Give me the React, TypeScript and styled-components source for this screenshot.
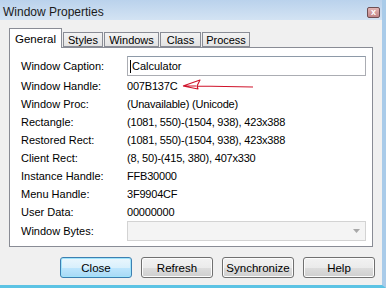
import React from "react";
import styled, { createGlobalStyle } from "styled-components";

const GlobalStyle = createGlobalStyle`
  html, body {
    margin: 0;
    padding: 0;
    overflow: hidden;
    background: #f0f0f0;
  }
`;

const Window = styled.div`
  width: 386px;
  height: 288px;
  box-sizing: border-box;
  display: flex;
  flex-direction: column;
  border-right: 4px solid #a9cbe9;
  border-bottom: 3px solid #5cc3e4;
  font-family: "Liberation Sans", Arial, sans-serif;
  font-size: 11px;
  color: #000;
`;

const TitleBar = styled.div`
  height: 20px;
  flex: none;
  display: flex;
  align-items: center;
  justify-content: space-between;
  padding: 0 2px 0 3px;
  background: linear-gradient(#bad2ec, #d3e3f3);
`;

const Title = styled.span`
  font-size: 12px;
  color: #1b1b1b;
  margin-top: 4px;
`;

const CloseBox = styled.div`
  width: 11px;
  height: 9px;
  margin-top: 5px;
  border: 1px solid #6d4e52;
  border-radius: 2px;
  background: linear-gradient(#e2b4b4, #c28587);
  color: #fff;
  font-size: 9px;
  font-weight: bold;
  line-height: 9px;
  text-align: center;
`;

const Body = styled.div`
  flex: 1;
  display: flex;
  flex-direction: column;
  padding: 8px 9px 0 9px;
`;

const TabRow = styled.div`
  display: flex;
  align-items: flex-end;
  height: 19px;
  position: relative;
  z-index: 1;
`;

const Tab = styled.div<{ $w: number; $active?: boolean }>`
  width: ${(p) => p.$w}px;
  height: ${(p) => (p.$active ? 20 : 15)}px;
  box-sizing: border-box;
  margin-bottom: ${(p) => (p.$active ? -1 : 0)}px;
  margin-right: 1px;
  border: 1px solid #898c95;
  border-bottom: ${(p) => (p.$active ? "none" : "1px solid #898c95")};
  background: ${(p) =>
    p.$active ? "#fff" : "linear-gradient(#f3f3f3, #e3e3e3)"};
  display: flex;
  align-items: center;
  justify-content: center;
  font-size: ${(p) => (p.$active ? 11.5 : 11)}px;
  padding-top: ${(p) => (p.$active ? 0 : 1)}px;
`;

const Panel = styled.div`
  position: relative;
  height: 200px;
  box-sizing: border-box;
  border: 1px solid #898c95;
  background: #fff;
  padding: 7px 0 0 11px;
  display: grid;
  grid-template-columns: 106px 239px;
  grid-template-rows: 22px repeat(8, 18px) 20px;
  align-items: center;
`;

const Label = styled.div`
  font-size: 11px;
  white-space: nowrap;
`;

const Value = styled.div`
  font-size: 11px;
  white-space: nowrap;
  letter-spacing: -0.2px;
`;

const TextBox = styled.div`
  height: 20px;
  box-sizing: border-box;
  border: 1px solid #abadb3;
  border-top-color: #8e9aa8;
  background: #fff;
  display: flex;
  align-items: center;
  padding-left: 2px;
  font-size: 11px;
`;

const Caret = styled.span`
  display: inline-block;
  width: 1px;
  height: 13px;
  background: #000;
  margin-right: 1px;
`;

const ComboBox = styled.div`
  height: 20px;
  box-sizing: border-box;
  border: 1px solid #d3d3d3;
  background: #f4f4f4;
  display: flex;
  align-items: center;
  justify-content: flex-end;
  padding-right: 5px;
`;

const Arrow = styled.svg`
  position: absolute;
  left: 171px;
  top: 30px;
`;

const ButtonRow = styled.div`
  display: flex;
  justify-content: flex-end;
  gap: 9px;
  margin: 10px -2px 0 0;
`;

const Button = styled.div<{ $default?: boolean }>`
  width: 72px;
  height: 21px;
  box-sizing: border-box;
  border: 1px solid ${(p) => (p.$default ? "#3c7fb1" : "#707070")};
  border-radius: 3px;
  background: ${(p) =>
    p.$default
      ? "linear-gradient(#eaf6fd 0%, #d9f0fc 50%, #bee6fd 51%, #a7d9f5 100%)"
      : "linear-gradient(#f2f2f2 0%, #ebebeb 50%, #dddddd 51%, #cfcfcf 100%)"};
  box-shadow: inset 0 0 0 1px ${(p) => (p.$default ? "#9fe4fb" : "#fcfcfc")};
  display: flex;
  align-items: center;
  justify-content: center;
  font-size: 11.5px;
`;

const tabs = [
  { name: "General", w: 53 },
  { name: "Styles", w: 40 },
  { name: "Windows", w: 55 },
  { name: "Class", w: 41 },
  { name: "Process", w: 48 },
];

const rows = [
  ["Window Handle:", "007B137C"],
  ["Window Proc:", "(Unavailable) (Unicode)"],
  ["Rectangle:", "(1081, 550)-(1504, 938), 423x388"],
  ["Restored Rect:", "(1081, 550)-(1504, 938), 423x388"],
  ["Client Rect:", "(8, 50)-(415, 380), 407x330"],
  ["Instance Handle:", "FFB30000"],
  ["Menu Handle:", "3F9904CF"],
  ["User Data:", "00000000"],
];

export default function App() {
  return (
    <Window>
      <GlobalStyle />
      <TitleBar>
        <Title>Window Properties</Title>
        <CloseBox>x</CloseBox>
      </TitleBar>
      <Body>
        <TabRow>
          {tabs.map((t, i) => (
            <Tab key={t.name} $w={t.w} $active={i === 0}>
              {t.name}
            </Tab>
          ))}
        </TabRow>
        <Panel>
          <Label>Window Caption:</Label>
          <TextBox>
            <Caret />
            Calculator
          </TextBox>
          {rows.map(([label, value]) => (
            <React.Fragment key={label}>
              <Label>{label}</Label>
              <Value>{value}</Value>
            </React.Fragment>
          ))}
          <Label>Window Bytes:</Label>
          <ComboBox>
            <svg width="7" height="4" viewBox="0 0 7 4">
              <path d="M0 0 L7 0 L3.5 4 Z" fill="#a8a8a8" />
            </svg>
          </ComboBox>
          <Arrow width="76" height="14" viewBox="0 0 76 14">
            <path
              d="M2 8 L19 2 L16 8 L72 9 M2 8 L17 11 L16 8 M2 8 L15 8"
              fill="none"
              stroke="#d0132b"
              strokeWidth="1.1"
              strokeLinejoin="round"
            />
          </Arrow>
        </Panel>
        <ButtonRow>
          <Button $default>Close</Button>
          <Button>Refresh</Button>
          <Button>Synchronize</Button>
          <Button>Help</Button>
        </ButtonRow>
      </Body>
    </Window>
  );
}
